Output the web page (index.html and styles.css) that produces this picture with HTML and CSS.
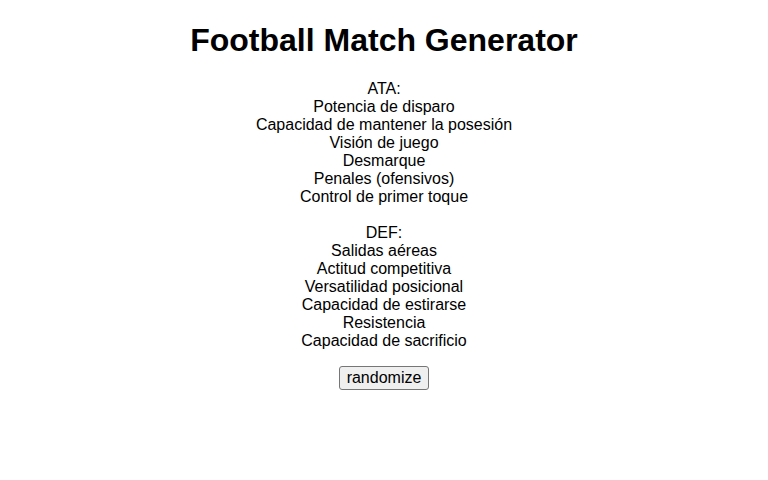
FILE: index.html
```html
<!DOCTYPE html>
<html>
<head>
<meta charset="utf-8">
<link rel="stylesheet" href="styles.css">
</head>
<body>
<div class="app">
<h1 class="title">Football Match Generator</h1>
<div class="lists">
<div class="group">ATA:<br>Potencia de disparo<br>Capacidad de mantener la posesión<br>Visión de juego<br>Desmarque<br>Penales (ofensivos)<br>Control de primer toque</div>
<div class="group">DEF:<br>Salidas aéreas<br>Actitud competitiva<br>Versatilidad posicional<br>Capacidad de estirarse<br>Resistencia<br>Capacidad de sacrificio</div>
</div>
<button class="btn">randomize</button>
</div>
</body>
</html>
```
FILE: styles.css
```css
body {
  margin: 8px;
  font-family: "Liberation Sans", Arial, sans-serif;
  font-size: 16px;
  line-height: 18px;
  color: #000;
  background: #fff;
}
.app {
  text-align: center;
}
.title {
  font-size: 32px;
  line-height: 37px;
  font-weight: bold;
  margin: 14px 0 21px;
}
.lists {
  display: flex;
  flex-direction: column;
  gap: 18px;
}
.btn {
  margin-top: 16px;
  font-family: "Liberation Sans", Arial, sans-serif;
  font-size: 16px;
  line-height: 18px;
  padding: 2px 7px;
  border: 1px solid #767676;
  border-radius: 3px;
  background: #efefef;
  color: #000;
}
```
